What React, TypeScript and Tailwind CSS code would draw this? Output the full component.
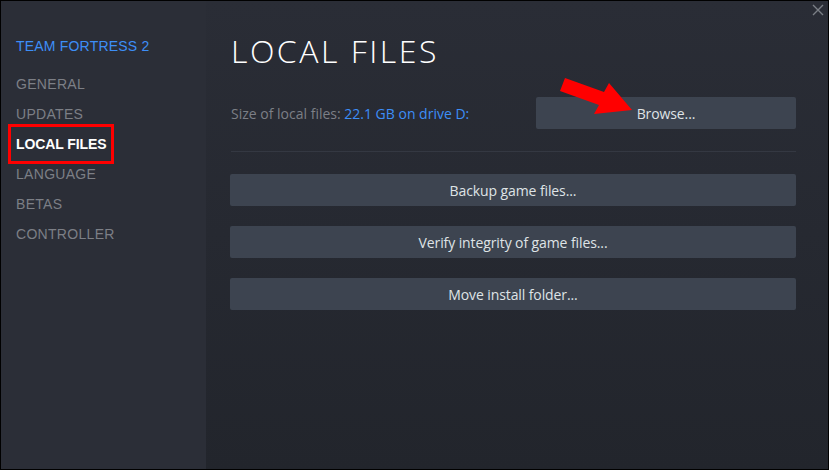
import React from "react";

const NAV = ["GENERAL", "UPDATES", "LOCAL FILES", "LANGUAGE", "BETAS", "CONTROLLER"];
const ACTIONS = ["Backup game files...", "Verify integrity of game files...", "Move install folder..."];

export default function App() {
  return (
    <div
      className="relative flex w-[829px] h-[470px] border border-black bg-[#24272f] overflow-hidden"
      style={{ fontFamily: '"Liberation Sans", Arial, sans-serif' }}
    >
      {/* sidebar */}
      <aside className="w-[205px] shrink-0 bg-[#2b2e37] pl-[15px] pt-[30px]">
        <div className="h-[30px] flex items-center text-[14px] text-[#3d8ef7] tracking-[0.2px]">
          TEAM FORTRESS 2
        </div>
        <ul className="mt-[8px]">
          {NAV.map((item) => {
            const active = item === "LOCAL FILES";
            return (
              <li
                key={item}
                className={`relative h-[30px] flex items-center text-[14px] ${
                  active ? "text-white font-bold tracking-[-0.1px]" : "text-[#7c7f86] tracking-[0.3px]"
                }`}
              >
                {item}
                {active && (
                  <span className="absolute left-[-8px] top-[-5px] w-[106px] h-[40px] border-[3px] border-[#ff0000]" />
                )}
              </li>
            );
          })}
        </ul>
      </aside>

      {/* main */}
      <main
        className="relative flex-1 bg-gradient-to-b from-[#2a2d36] to-[#22252c] pl-[24px] pr-[32px] pt-[32px]"
        style={{ fontFamily: '"Open Sans", "Liberation Sans", sans-serif' }}
      >
        <button className="absolute right-[4px] top-[3px] text-[#7b7f86]">
          <svg width="12" height="12" viewBox="0 0 12 12" stroke="currentColor" strokeWidth="1.4">
            <path d="M1 1 L11 11 M11 1 L1 11" />
          </svg>
        </button>

        <h1 className="pl-[1px] h-[36px] flex items-center text-[32px] font-light text-white tracking-[2.5px]">
          LOCAL FILES
        </h1>

        <div className="mt-[28px] flex items-center justify-between h-[32px] pl-[1px]">
          <span className="text-[14px] text-[#7c7f86]">
            Size of local files: <span className="text-[#3d8ef7]">22.1 GB on drive D:</span>
          </span>
          <button className="w-[260px] h-[32px] rounded-[2px] bg-[#3d4450] text-[14px] text-[#dfe3e6] tracking-[-0.1px]">
            Browse...
          </button>
        </div>

        <div className="mt-[22px] ml-[1px] h-px bg-[#343842]" />

        <div className="mt-[22px] flex flex-col gap-[20px]">
          {ACTIONS.map((a) => (
            <button
              key={a}
              className="w-full h-[32px] rounded-[2px] bg-[#3d4450] text-[14px] text-[#dfe3e6] tracking-[-0.1px]"
            >
              {a}
            </button>
          ))}
        </div>
      </main>

      {/* annotation arrow */}
      <svg className="absolute left-0 top-0 pointer-events-none" width="829" height="470">
        <polygon points="564,77 603,91 608,82 631,109 593,113 598,104 559,90" fill="#ff0000" />
      </svg>
    </div>
  );
}
